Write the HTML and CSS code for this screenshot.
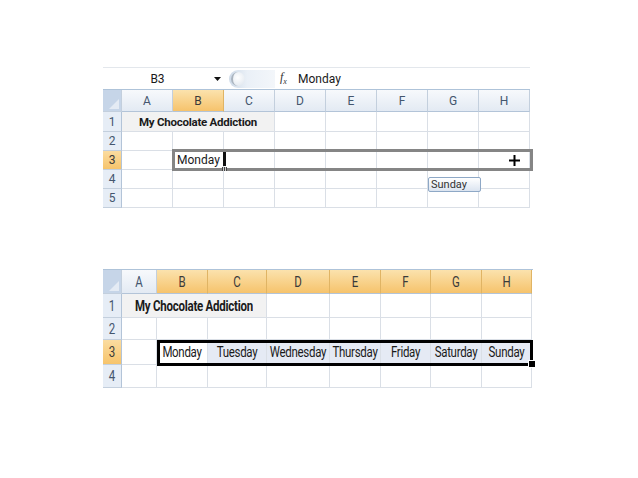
FILE: index.html
```html
<!DOCTYPE html>
<html lang="en">
<head>
  <meta charset="UTF-8" />
  <title>My Chocolate Addiction - AutoFill</title>
  <link rel="stylesheet" href="styles.css">
</head>
<body>

  <!-- first shot: dragging the fill handle -->
  <div class="shot shot-top">
    <div class="formula-bar">
      <div class="name-box">B3</div>
      <div class="name-drop">
        <svg width="7" height="4" viewBox="0 0 7 4"><path d="M0 0h7L3.5 4z" fill="#111"/></svg>
      </div>
      <div class="fx-btn"><span class="fx-knob"></span></div>
      <div class="fx">f<sub>x</sub></div>
      <div class="formula">Monday</div>
    </div>

    <div class="grid-wrap">
      <div class="grid grid-small">
        <div class="corner"><span></span></div>
        <div class="col-head">A</div>
        <div class="col-head on">B</div>
        <div class="col-head">C</div>
        <div class="col-head">D</div>
        <div class="col-head">E</div>
        <div class="col-head">F</div>
        <div class="col-head">G</div>
        <div class="col-head">H</div>

        <div class="row-head">1</div>
        <div class="cell title span3">My Chocolate Addiction</div>
        <div class="cell"></div><div class="cell"></div><div class="cell"></div>
        <div class="cell"></div><div class="cell"></div>

        <div class="row-head">2</div>
        <div class="cell"></div><div class="cell"></div><div class="cell"></div><div class="cell"></div>
        <div class="cell"></div><div class="cell"></div><div class="cell"></div><div class="cell"></div>

        <div class="row-head on">3</div>
        <div class="cell"></div>
        <div class="cell text">Monday</div>
        <div class="cell"></div><div class="cell"></div><div class="cell"></div>
        <div class="cell"></div><div class="cell"></div><div class="cell"></div>

        <div class="row-head">4</div>
        <div class="cell"></div><div class="cell"></div><div class="cell"></div><div class="cell"></div>
        <div class="cell"></div><div class="cell"></div><div class="cell"></div><div class="cell"></div>

        <div class="row-head">5</div>
        <div class="cell"></div><div class="cell"></div><div class="cell"></div><div class="cell"></div>
        <div class="cell"></div><div class="cell"></div><div class="cell"></div><div class="cell"></div>
      </div>

      <div class="ants"></div>
      <div class="ibeam"></div>
      <div class="ibeam-handle"></div>
      <div class="cross">
        <svg width="11" height="11" viewBox="0 0 11 11"><path d="M4.5 0h2v11h-2zM0 4.5h11v2H0z" fill="#000"/></svg>
      </div>
      <div class="fill-tip">Sunday</div>
    </div>
  </div>

  <!-- second shot: after the fill (screenshot was stretched a bit taller) -->
  <div class="shot shot-bottom">
    <div class="grid-wrap">
      <div class="grid grid-big">
        <div class="corner"><span></span></div>
        <div class="col-head"><span>A</span></div>
        <div class="col-head on"><span>B</span></div>
        <div class="col-head on"><span>C</span></div>
        <div class="col-head on"><span>D</span></div>
        <div class="col-head on"><span>E</span></div>
        <div class="col-head on"><span>F</span></div>
        <div class="col-head on"><span>G</span></div>
        <div class="col-head on"><span>H</span></div>

        <div class="row-head"><span>1</span></div>
        <div class="cell title span3"><span>My Chocolate Addiction</span></div>
        <div class="cell"></div><div class="cell"></div><div class="cell"></div>
        <div class="cell"></div><div class="cell"></div>

        <div class="row-head"><span>2</span></div>
        <div class="cell"></div><div class="cell"></div><div class="cell"></div><div class="cell"></div>
        <div class="cell"></div><div class="cell"></div><div class="cell"></div><div class="cell"></div>

        <div class="row-head on"><span>3</span></div>
        <div class="cell"></div>
        <div class="cell day"><span>Monday</span></div>
        <div class="cell day picked"><span>Tuesday</span></div>
        <div class="cell day picked"><span>Wednesday</span></div>
        <div class="cell day picked"><span>Thursday</span></div>
        <div class="cell day picked"><span>Friday</span></div>
        <div class="cell day picked"><span>Saturday</span></div>
        <div class="cell day picked"><span>Sunday</span></div>

        <div class="row-head"><span>4</span></div>
        <div class="cell"></div><div class="cell"></div><div class="cell"></div><div class="cell"></div>
        <div class="cell"></div><div class="cell"></div><div class="cell"></div><div class="cell"></div>
      </div>

      <div class="range"></div>
      <div class="handle"></div>
    </div>
  </div>

</body>
</html>
```

FILE: styles.css
```css
:root {
  --grid-line: #dadfe6;
  --head-line: #c3cfdd;
  --head-text: #44566e;
}

body {
  margin: 0;
  background: #ffffff;
  font-family: Roboto, 'Liberation Sans', sans-serif;
  color: #1a1a1a;
}

.shot {
  margin-left: 103px;
}

.shot-top {
  margin-top: 67px;
  width: 427px;
}

.shot-bottom {
  margin-top: 61px;
  width: 430px;
}

/* formula bar */
.formula-bar {
  height: 22px;
  box-sizing: border-box;
  border-top: 1px solid #e3e7ec;
  display: flex;
  align-items: center;
  font-size: 12px;
}

.name-box {
  width: 109px;
  text-align: center;
}

.name-drop {
  width: 11px;
  display: flex;
  justify-content: center;
  padding-top: 1px;
}

.fx-btn {
  margin-left: 6px;
  width: 46px;
  height: 18px;
  border-radius: 10px 0 0 10px;
  background: linear-gradient(to right, #cfdbe9, #eaf0f7 40%, #f3f6fa);
  display: flex;
  align-items: center;
  padding-left: 2px;
  box-sizing: border-box;
}

.fx-knob {
  width: 12px;
  height: 14px;
  border-radius: 50%;
  border-left: 2px solid #aab4bf;
  background: radial-gradient(circle at 40% 40%, #ffffff, #dbe3ec);
}

.fx {
  margin-left: 5px;
  width: 18px;
  font-family: 'Liberation Serif', serif;
  font-style: italic;
  font-size: 12px;
  color: #333;
}

.fx sub {
  font-size: 8px;
}

/* grid */
.grid-wrap {
  position: relative;
}

.grid {
  display: grid;
  border-top: 1px solid #aec3d9;
}

.grid-small {
  grid-template-columns: 19px repeat(8, 51px);
  grid-template-rows: 22px 20px 19px 19px 19px 19px;
  font-size: 12px;
}

.grid-big {
  grid-template-columns: 19px 35px 51px 59px 63px 51px 50px 51px 50px;
  grid-template-rows: 24px 24px 22px 25px 23px;
  font-size: 11.5px;
}

.grid-big span {
  display: inline-block;
  transform: scaleY(1.22);
}

.grid > div {
  box-sizing: border-box;
  border-right: 1px solid var(--grid-line);
  border-bottom: 1px solid var(--grid-line);
  display: flex;
  align-items: center;
  white-space: nowrap;
  overflow: hidden;
}

.corner {
  background: #c6d5e8;
  position: relative;
  border-right-color: var(--head-line) !important;
  border-bottom-color: var(--head-line) !important;
}

.grid .corner span {
  position: absolute;
  right: 2px;
  bottom: 2px;
  width: 0;
  height: 0;
  transform: none;
  border-left: 10px solid transparent;
  border-bottom: 10px solid #e4ebf4;
}

.col-head {
  justify-content: center;
  color: var(--head-text);
  background: linear-gradient(#f7f9fc, #e3eaf3);
  border-right-color: var(--head-line) !important;
  border-bottom-color: #b3c4d8 !important;
}

.row-head {
  justify-content: center;
  color: var(--head-text);
  background: #e6edf6;
  border-right-color: #b3c4d8 !important;
  border-bottom-color: var(--head-line) !important;
}

.col-head.on {
  background: linear-gradient(#fbe2ad, #f6c36c);
  color: #3a3a3a;
  border-right-color: #e0b464 !important;
}

.row-head.on {
  background: linear-gradient(#fbdca0, #f6c46c);
  color: #3a3a3a;
}

.cell.title {
  grid-column: span 3;
  background: #f2f2f2;
  justify-content: center;
  font-weight: bold;
  font-size: 11.5px;
  letter-spacing: -0.25px;
}

.cell.text {
  padding-left: 4px;
}

.cell.day {
  justify-content: center;
  letter-spacing: -0.3px;
}

.cell.picked {
  background: #e5eaf4;
}

/* overlays on the first sheet */
.ants {
  position: absolute;
  left: 69px;
  top: 60px;
  width: 361px;
  height: 22px;
  box-sizing: border-box;
  border: 3px solid #858585;
}

.ibeam {
  position: absolute;
  left: 120px;
  top: 63px;
  width: 3px;
  height: 14px;
  background: #111;
}

.ibeam-handle {
  position: absolute;
  left: 119px;
  top: 78px;
  width: 5px;
  height: 4px;
  background: repeating-linear-gradient(90deg, #444 0 1px, #ccc 1px 2px);
}

.cross {
  position: absolute;
  left: 406px;
  top: 66px;
  line-height: 0;
}

.fill-tip {
  position: absolute;
  left: 325px;
  top: 88px;
  width: 53px;
  height: 15px;
  box-sizing: border-box;
  border: 1px solid #8ea8c6;
  border-radius: 2px;
  background: linear-gradient(#ffffff, #dbe4f0);
  font-size: 11px;
  color: #333;
  padding-left: 2px;
  line-height: 13px;
}

/* overlays on the second sheet */
.range {
  position: absolute;
  left: 54px;
  top: 71px;
  width: 376px;
  height: 26px;
  box-sizing: border-box;
  border: 3px solid #000;
}

.handle {
  position: absolute;
  left: 425px;
  top: 91px;
  width: 6px;
  height: 6px;
  background: #000;
  border: 1px solid #fff;
}
```
